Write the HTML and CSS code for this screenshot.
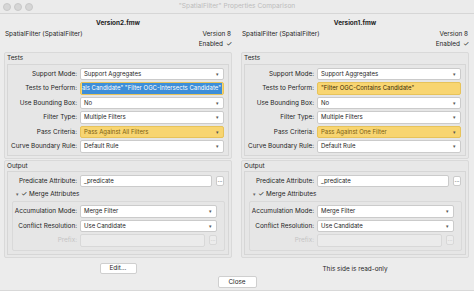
FILE: index.html
```html
<!DOCTYPE html>
<html lang="en">
<head>
  <meta charset="UTF-8">
  <title>SpatialFilter Properties Comparison</title>
  <link rel="stylesheet" href="styles.css">
</head>
<body>
  <div class="window">
    <div class="titlebar">
      <div class="lights"><span></span><span></span><span></span></div>
      <div class="title">"SpatialFilter" Properties Comparison</div>
    </div>

    <div class="main">
      <div class="panel">
        <div class="panel-head">Version2.fmw</div>
        <div class="info"><span>SpatialFilter (SpatialFilter)</span><span>Version 8</span></div>
        <div class="info enabled"><span>Enabled</span><span class="tick">✓</span></div>

        <div class="group">
          <div class="group-title">Tests</div>
          <div class="group-body">
            <div class="row"><label>Support Mode:</label><div class="field select">Support Aggregates</div></div>
            <div class="row"><label>Tests to Perform:</label><div class="field changed scrolled"><span class="selected">als Candidate" "Filter OGC-Intersects Candidate"</span></div></div>
            <div class="row"><label>Use Bounding Box:</label><div class="field select">No</div></div>
            <div class="row"><label>Filter Type:</label><div class="field select">Multiple Filters</div></div>
            <div class="row"><label>Pass Criteria:</label><div class="field select changed criteria">Pass Against All Filters</div></div>
            <div class="row"><label>Curve Boundary Rule:</label><div class="field select">Default Rule</div></div>
          </div>
        </div>

        <div class="group">
          <div class="group-title">Output</div>
          <div class="group-body">
            <div class="row"><label>Predicate Attribute:</label><div class="field-pair"><div class="field">_predicate</div><div class="dots">...</div></div></div>
            <div class="merge"><span class="arrow">▾</span><span class="check">✓</span>Merge Attributes</div>
            <div class="subbox">
              <div class="row"><label>Accumulation Mode:</label><div class="field select">Merge Filter</div></div>
              <div class="row"><label>Conflict Resolution:</label><div class="field select">Use Candidate</div></div>
              <div class="row disabled"><label>Prefix:</label><div class="field-pair"><div class="field"></div><div class="dots">...</div></div></div>
            </div>
          </div>
        </div>

        <div class="panel-foot"><div class="button">Edit...</div></div>
      </div>

      <div class="panel">
        <div class="panel-head">Version1.fmw</div>
        <div class="info"><span>SpatialFilter (SpatialFilter)</span><span>Version 8</span></div>
        <div class="info enabled"><span>Enabled</span><span class="tick">✓</span></div>

        <div class="group">
          <div class="group-title">Tests</div>
          <div class="group-body">
            <div class="row"><label>Support Mode:</label><div class="field select">Support Aggregates</div></div>
            <div class="row"><label>Tests to Perform:</label><div class="field changed">"Filter OGC-Contains Candidate"</div></div>
            <div class="row"><label>Use Bounding Box:</label><div class="field select">No</div></div>
            <div class="row"><label>Filter Type:</label><div class="field select">Multiple Filters</div></div>
            <div class="row"><label>Pass Criteria:</label><div class="field select changed criteria">Pass Against One Filter</div></div>
            <div class="row"><label>Curve Boundary Rule:</label><div class="field select">Default Rule</div></div>
          </div>
        </div>

        <div class="group">
          <div class="group-title">Output</div>
          <div class="group-body">
            <div class="row"><label>Predicate Attribute:</label><div class="field-pair"><div class="field">_predicate</div><div class="dots">...</div></div></div>
            <div class="merge"><span class="arrow">▾</span><span class="check">✓</span>Merge Attributes</div>
            <div class="subbox">
              <div class="row"><label>Accumulation Mode:</label><div class="field select">Merge Filter</div></div>
              <div class="row"><label>Conflict Resolution:</label><div class="field select">Use Candidate</div></div>
              <div class="row disabled"><label>Prefix:</label><div class="field-pair"><div class="field"></div><div class="dots">...</div></div></div>
            </div>
          </div>
        </div>

        <div class="panel-foot"><div class="note">This side is read-only</div></div>
      </div>
    </div>

    <div class="footer"><div class="button">Close</div></div>
  </div>
</body>
</html>
```

FILE: styles.css
```css
body {
  margin: 0;
  font-family: Inter, "Liberation Sans", sans-serif;
  font-size: 6.4px;
  color: #1e1e1e;
  background: #fff;
}
.window {
  width: 474px;
  height: 290px;
  background: #ececec;
  border-bottom: 1px solid #d8d8d8;
}
.titlebar {
  height: 13px;
  position: relative;
  background: #ebebeb;
  border-bottom: 1px solid #d6d6d6;
}
.title {
  text-align: center;
  line-height: 13px;
  color: #bcbcbc;
  font-size: 6.6px;
}
.lights {
  position: absolute;
  left: 3px;
  top: 3px;
  display: flex;
  gap: 3px;
}
.lights span {
  width: 6px;
  height: 6px;
  border-radius: 50%;
  background: #d6d6d6;
  border: 0.5px solid #c8c8c8;
}
.main {
  display: grid;
  grid-template-columns: 237px 237px;
}
.panel {
  padding: 4px 5px 0 4px;
}
.panel-head {
  text-align: center;
  font-weight: 700;
  line-height: 10.5px;
}
.info {
  display: flex;
  justify-content: space-between;
  line-height: 10.5px;
  padding: 0 1px 0 1px;
}
.enabled {
  justify-content: flex-end;
  gap: 3px;
  padding-right: 0;
}
.tick {
  width: 6px;
  font-size: 7px;
}
.group {
  margin-top: 2px;
  background: #e8e8e8;
  border: 1px solid #d9d9d9;
  border-radius: 2px;
}
.group + .group {
  margin-top: 1px;
}
.group-title {
  line-height: 11px;
  padding-left: 2px;
}
.group + .group .group-title {
  line-height: 10px;
}
.group-body {
  margin: 0 2px 2px;
  background: #e6e6e6;
  border: 1px solid #d6d6d6;
  padding: 3px 4px 2px 0;
  display: flex;
  flex-direction: column;
  gap: 2px;
}
.row {
  display: grid;
  grid-template-columns: 69px 1fr;
  column-gap: 3px;
  align-items: center;
  height: 12.5px;
}
.row label {
  text-align: right;
}
.field {
  height: 12.5px;
  box-sizing: border-box;
  background: #fff;
  border: 1px solid #cbcbcb;
  border-radius: 2px;
  line-height: 10.5px;
  padding-left: 3px;
  font-size: 6px;
  white-space: nowrap;
  overflow: hidden;
  position: relative;
}
.select::after {
  content: "▾";
  position: absolute;
  right: 4px;
  top: 0;
  font-size: 5px;
  color: #555;
}
.changed {
  background: #f8d571;
  border-color: #e7c35a;
  color: #3b2e08;
}
.criteria {
  color: #7c5f12;
}
.scrolled {
  display: flex;
  justify-content: flex-end;
  padding: 0 1px;
}
.selected {
  flex: none;
  background: #3d8ed8;
  color: #fff;
  line-height: 10.5px;
  padding-right: 1px;
}
.field-pair {
  display: grid;
  grid-template-columns: 1fr 8px;
  column-gap: 4px;
  align-items: center;
}
.dots {
  height: 10px;
  box-sizing: border-box;
  background: #fff;
  border: 1px solid #cbcbcb;
  border-radius: 2px;
  text-align: center;
  line-height: 6px;
  font-size: 6px;
}
.merge {
  height: 11px;
  line-height: 10px;
  padding-left: 5px;
  display: flex;
}
.arrow {
  width: 8px;
  font-size: 5px;
  color: #666;
  text-align: center;
}
.check {
  width: 8px;
  font-size: 7px;
}
.subbox {
  margin: -1px -1px 1px 4px;
  border: 1px solid #d9d9d9;
  border-radius: 2px;
  background: #e6e6e6;
  padding: 3px 7px 3px 0;
  display: flex;
  flex-direction: column;
  gap: 2px;
}
.subbox .row {
  grid-template-columns: 64px 1fr;
}
.disabled label {
  color: #c4c4c4;
}
.disabled .field {
  background: #ebebeb;
  border-color: #d8d8d8;
}
.disabled .dots {
  background: #ececec;
  border-color: #d8d8d8;
  color: #bbb;
}
.panel-foot {
  height: 14px;
  margin-top: 4px;
  display: flex;
  justify-content: center;
  align-items: center;
}
.button {
  width: 37px;
  height: 11px;
  box-sizing: border-box;
  background: #fff;
  border: 1px solid #cfcfcf;
  border-radius: 2px;
  text-align: center;
  line-height: 9px;
}
.note {
  line-height: 10px;
}
.footer {
  display: flex;
  justify-content: center;
}
.footer .button {
  width: 39px;
  height: 12px;
  line-height: 10px;
}
```
